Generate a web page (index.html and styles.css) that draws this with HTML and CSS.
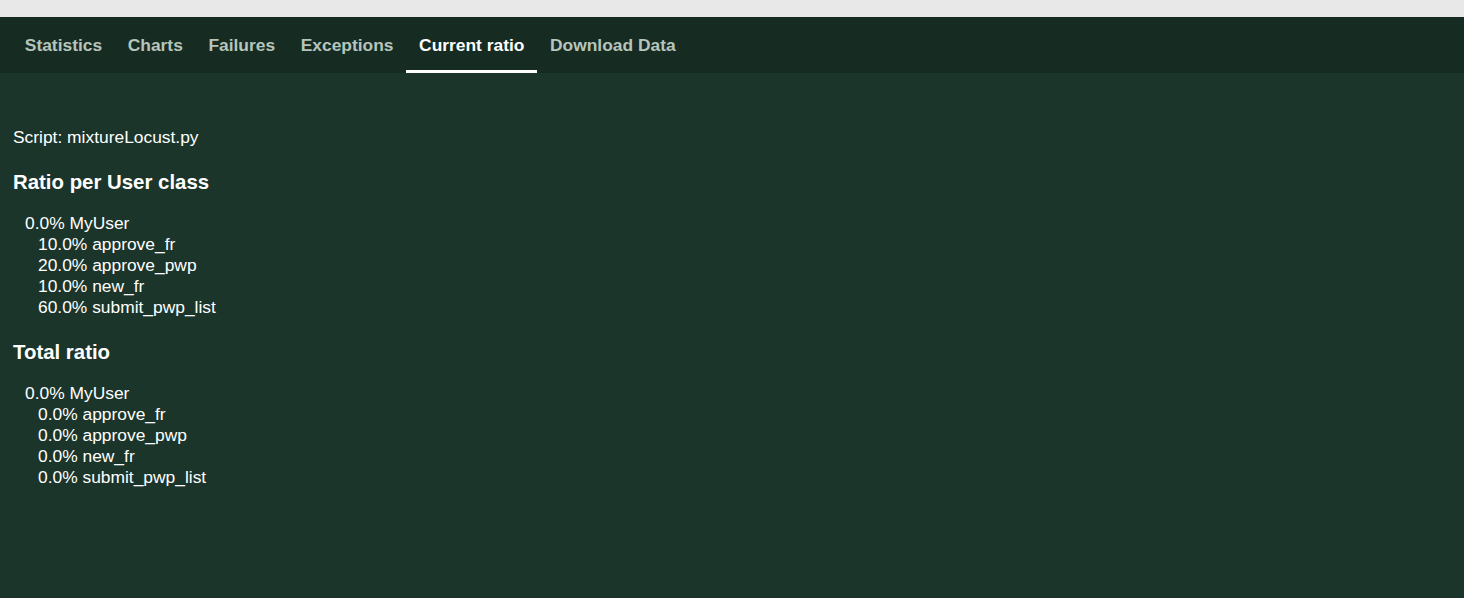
FILE: index.html
```html
<!DOCTYPE html>
<html lang="en">
<head>
	<meta charset="UTF-8">
	<title>Current ratio</title>
	<link rel="stylesheet" href="styles.css">
</head>
<body>
	<div class="chrome"></div>
	<nav class="tabs">
		<ul>
			<li><a href="#">Statistics</a></li>
			<li><a href="#">Charts</a></li>
			<li><a href="#">Failures</a></li>
			<li><a href="#">Exceptions</a></li>
			<li class="act"><a href="#">Current ratio</a></li>
			<li><a href="#">Download Data</a></li>
		</ul>
	</nav>
	<div class="ratio">
		<p class="script">Script: mixtureLocust.py</p>
		<h3>Ratio per User class</h3>
		<ul class="tree">
			<li>0.0% MyUser
				<ul>
					<li>10.0% approve_fr</li>
					<li>20.0% approve_pwp</li>
					<li>10.0% new_fr</li>
					<li>60.0% submit_pwp_list</li>
				</ul>
			</li>
		</ul>
		<h3>Total ratio</h3>
		<ul class="tree">
			<li>0.0% MyUser
				<ul>
					<li>0.0% approve_fr</li>
					<li>0.0% approve_pwp</li>
					<li>0.0% new_fr</li>
					<li>0.0% submit_pwp_list</li>
				</ul>
			</li>
		</ul>
	</div>
</body>
</html>
```

FILE: styles.css
```css
	html,body{
		margin: 0;
		height: 100%;
	}
	body{
		background: #1b352b;
		font-family: "Liberation Sans", Arial, sans-serif;
		color: #fff;
	}
	ul{
		list-style: none;
		margin: 0;
		padding: 0;
	}
	.chrome{
		height: 17px;
		background: #e8e8e8;
	}
	.tabs{
		background: #162b22;
		height: 56px;
		padding: 0 12px;
	}
	.tabs ul{
		display: flex;
		height: 100%;
	}
	.tabs li{
		display: flex;
		align-items: center;
		padding: 0 12.8px;
		border-bottom: 3px solid transparent;
		box-sizing: border-box;
	}
	.tabs a{
		color: #b6c5bc;
		text-decoration: none;
		font-weight: bold;
		font-size: 17.4px;
		padding-top: 3px;
	}
	.tabs .act{
		border-bottom-color: #fff;
	}
	.tabs .act a{
		color: #fff;
	}
	/* ratio tab */
	.ratio{
		padding: 54px 13px 0;
		font-size: 17.4px;
		line-height: 21px;
	}
	.script{
		margin: 0;
	}
	.ratio h3{
		font-size: 20.4px;
		line-height: 22px;
		margin: 23px 0 20px;
	}
	.tree{
		padding-left: 12px;
	}
	.tree ul{
		padding-left: 13px;
	}
```
